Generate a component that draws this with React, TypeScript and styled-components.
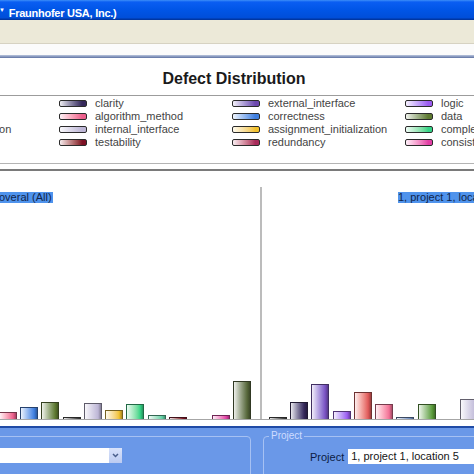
import styled, { createGlobalStyle } from "styled-components";

const GlobalStyle = createGlobalStyle`
  html, body { margin: 0; padding: 0; background: #fff; }
  body {
    width: 474px;
    height: 474px;
    overflow: hidden;
    font-family: "Liberation Sans", Arial, sans-serif;
  }
`;

const Window = styled.div`
  width: 474px;
  height: 474px;
  display: flex;
  flex-direction: column;
  overflow: hidden;
`;

const TitleBar = styled.div`
  height: 20px;
  flex-shrink: 0;
  box-sizing: border-box;
  padding: 6px 0 0 0;
  display: flex;
  align-items: flex-start;
  gap: 4px;
  background: linear-gradient(#3d8ff8 0, #0a5ef2 2px, #0055e6 10px, #004ed8 18px, #0036a2 19px);
  color: #fff;
  font-size: 11px;
  line-height: 14px;
  font-weight: bold;
  white-space: nowrap;
  letter-spacing: -0.25px;
`;

const TitleMark = styled.span`
  font-size: 6px;
  line-height: 8px;
  margin-left: -1px;
`;

const Toolbar = styled.div`
  height: 23px;
  flex-shrink: 0;
  background: #ece9d8;
  border-bottom: 1px solid #d6d2c2;
`;

const Strip = styled.div`
  height: 11px;
  flex-shrink: 0;
  background: #fbfbfb;
`;

const StripEdge = styled.div`
  height: 3px;
  flex-shrink: 0;
  background: linear-gradient(#b9c5dd, #5d71a2);
`;

const ChartArea = styled.div`
  height: 368px;
  flex-shrink: 0;
  background: #fff;
  overflow: hidden;
  display: flex;
  flex-direction: column;
`;

const ChartTitle = styled.div`
  margin-top: 11px;
  height: 19px;
  line-height: 19px;
  text-align: center;
  padding-right: 6px;
  font-size: 16px;
  font-weight: bold;
  color: #1a1a1a;
`;

const Rule = styled.div<{ $top: number; $h: number; $c: string }>`
  flex-shrink: 0;
  margin-top: ${(p) => p.$top}px;
  height: ${(p) => p.$h}px;
  background: ${(p) => p.$c};
`;

const Legend = styled.div`
  display: grid;
  grid-template-columns: repeat(4, 173px);
  grid-template-rows: repeat(4, 13.25px);
  grid-auto-flow: column;
  margin-left: -114px;
  padding-top: 0.5px;
`;

const LegendItem = styled.div`
  display: flex;
  align-items: center;
  font-size: 11px;
  line-height: 13px;
  color: #444;
  white-space: nowrap;
`;

const Swatch = styled.span<{ $c: string }>`
  flex-shrink: 0;
  width: 28px;
  height: 7px;
  box-sizing: border-box;
  margin-right: 8px;
  border: 1px solid #2b2b2b;
  border-radius: 2px;
  background: linear-gradient(90deg, color-mix(in srgb, ${(p) => p.$c} 8%, white), ${(p) => p.$c} 85%);
`;

const Plot = styled.div`
  height: 248px;
  flex-shrink: 0;
  display: flex;
  border-bottom: 1px solid #a6a6a6;
`;

const Panel = styled.div<{ $w?: number }>`
  ${(p) => (p.$w ? `width: ${p.$w}px;` : "flex: 1;")}
  flex-shrink: 0;
  display: flex;
  flex-direction: column;
  min-width: 0;
  overflow: hidden;
`;

const PanelLabel = styled.div<{ $left: number }>`
  align-self: flex-start;
  margin-top: 21px;
  margin-left: ${(p) => p.$left}px;
  height: 11px;
  line-height: 11px;
  padding-right: 1px;
  font-size: 11px;
  white-space: nowrap;
  color: #12254a;
  background: #4f93ec;
`;

const Bars = styled.div<{ $pad: number }>`
  margin-top: auto;
  display: flex;
  align-items: flex-end;
  gap: 3.3px;
  margin-left: ${(p) => p.$pad}px;
`;

const Bar = styled.div<{ $h: number; $c: string }>`
  flex-shrink: 0;
  width: 18px;
  height: ${(p) => p.$h}px;
  box-sizing: border-box;
  border: ${(p) => (p.$h > 0 ? "1px" : "0")} solid color-mix(in srgb, ${(p) => p.$c} 45%, #111);
  border-bottom: none;
  background: linear-gradient(
    90deg,
    color-mix(in srgb, ${(p) => p.$c} 10%, white),
    ${(p) => p.$c} 82%,
    color-mix(in srgb, ${(p) => p.$c} 70%, black)
  );
`;

const Divider = styled.div`
  width: 2px;
  flex-shrink: 0;
  margin-top: 16px;
  background: #bcbcbc;
`;

const BottomPanel = styled.div`
  flex: 1;
  display: flex;
  align-items: flex-start;
  gap: 12px;
  overflow: hidden;
  background: #6a98e8;
  border-top: 2px solid #1f4ba6;
`;

const Group = styled.fieldset<{ $top: number; $left?: number; $w: number }>`
  margin: ${(p) => p.$top}px 0 0 ${(p) => p.$left ?? 0}px;
  padding: 0;
  width: ${(p) => p.$w}px;
  min-width: 0;
  height: 60px;
  flex-shrink: 0;
  box-sizing: border-box;
  border: 1px solid #a6c1f3;
  border-radius: 4px;
`;

const GroupTitle = styled.legend`
  margin-left: 5px;
  padding: 0 2px;
  font-size: 10px;
  line-height: 12px;
  color: #cfdcff;
`;

const Combo = styled.div`
  display: flex;
  margin: 11px 0 0 39px;
  width: 142px;
  height: 15px;
  background: #fff;
`;

const ComboText = styled.div`
  flex: 1;
`;

const ComboButton = styled.div`
  width: 13px;
  display: flex;
  align-items: center;
  justify-content: center;
  background: linear-gradient(#d9e3fb, #bccbf1);
`;

const FieldRow = styled.div`
  display: flex;
  align-items: center;
  gap: 4px;
  margin: 7px 0 0 46px;
`;

const FieldLabel = styled.span`
  font-size: 11px;
  color: #0c1c44;
`;

const FieldInput = styled.div`
  width: 150px;
  height: 15px;
  line-height: 15px;
  padding-left: 3px;
  font-size: 11px;
  color: #151515;
  background: #fff;
  white-space: nowrap;
`;

const legend = [
  { name: "", c: "#8a8a8a" },
  { name: "", c: "#8a8a8a" },
  { name: "interface definition", c: "#8a8a8a" },
  { name: "", c: "#8a8a8a" },
  { name: "clarity", c: "#35285a" },
  { name: "algorithm_method", c: "#ec5f8c" },
  { name: "internal_interface", c: "#bdb6d6" },
  { name: "testability", c: "#7d1024" },
  { name: "external_interface", c: "#6d48ae" },
  { name: "correctness", c: "#3f7fe0" },
  { name: "assignment_initialization", c: "#f2c22e" },
  { name: "redundancy", c: "#a82a5a" },
  { name: "logic", c: "#9c5cf0" },
  { name: "data", c: "#5e7a30" },
  { name: "completeness", c: "#35d487" },
  { name: "consistency", c: "#e23ea6" },
];

const leftBars = [
  { h: 7, c: "#ec5f8c" },
  { h: 12, c: "#3f7fe0" },
  { h: 17, c: "#5e7a30" },
  { h: 2, c: "#444444" },
  { h: 16, c: "#bdb6d6" },
  { h: 9, c: "#f2c22e" },
  { h: 15, c: "#35d487" },
  { h: 4, c: "#5fd0a4" },
  { h: 2, c: "#7d1024" },
  { h: 0, c: "#ffffff" },
  { h: 4, c: "#e23ea6" },
  { h: 38, c: "#56673a" },
];

const rightBars = [
  { h: 2, c: "#444444" },
  { h: 17, c: "#35285a" },
  { h: 35, c: "#7a52c4" },
  { h: 8, c: "#9c5cf0" },
  { h: 27, c: "#e05a5a" },
  { h: 15, c: "#f27096" },
  { h: 2, c: "#6f8fc4" },
  { h: 15, c: "#5a9c3a" },
  { h: 0, c: "#ffffff" },
  { h: 20, c: "#c4bedb" },
];

const Chevron = () => (
  <svg width="9" height="9" viewBox="0 0 9 9">
    <polyline points="2,3 4.5,5.5 7,3" fill="none" stroke="#4a5f8c" strokeWidth="1.5" />
  </svg>
);

export default function App() {
  return (
    <>
      <GlobalStyle />
      <Window>
        <TitleBar>
          <TitleMark>▼</TitleMark>
          <span>Fraunhofer USA, Inc.)</span>
        </TitleBar>
        <Toolbar />
        <Strip />
        <StripEdge />
        <ChartArea>
          <ChartTitle>Defect Distribution</ChartTitle>
          <Rule $top={7} $h={1} $c="#9c9c9c" />
          <Legend>
            {legend.map((item, i) => (
              <LegendItem key={i}>
                <Swatch $c={item.c} />
                {item.name}
              </LegendItem>
            ))}
          </Legend>
          <Rule $top={13} $h={1} $c="#b4b4b4" />
          <Rule $top={5} $h={2} $c="#7a7a7a" />
          <Plot>
            <Panel $w={260}>
              <PanelLabel $left={-1}>overal (All)</PanelLabel>
              <Bars $pad={-1.3}>
                {leftBars.map((b, i) => (
                  <Bar key={i} $h={b.h} $c={b.c} />
                ))}
              </Bars>
            </Panel>
            <Divider />
            <Panel>
              <PanelLabel $left={136}>1, project 1, location 5</PanelLabel>
              <Bars $pad={6.7}>
                {rightBars.map((b, i) => (
                  <Bar key={i} $h={b.h} $c={b.c} />
                ))}
              </Bars>
            </Panel>
          </Plot>
        </ChartArea>
        <BottomPanel>
          <Group $top={8} $left={-60} $w={311}>
            <Combo>
              <ComboText />
              <ComboButton>
                <Chevron />
              </ComboButton>
            </Combo>
          </Group>
          <Group $top={2} $w={260}>
            <GroupTitle>Project</GroupTitle>
            <FieldRow>
              <FieldLabel>Project</FieldLabel>
              <FieldInput>1, project 1, location 5</FieldInput>
            </FieldRow>
          </Group>
        </BottomPanel>
      </Window>
    </>
  );
}
